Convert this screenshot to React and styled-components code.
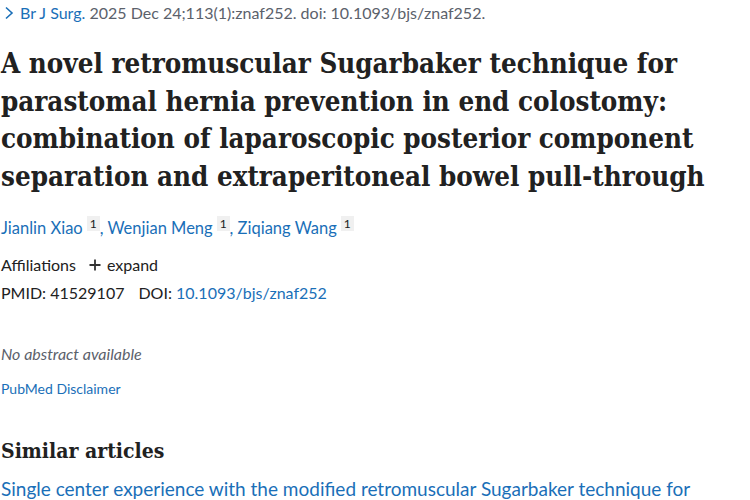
import styled, { createGlobalStyle } from 'styled-components'

const GlobalStyle = createGlobalStyle`
  html, body {
    margin: 0;
    padding: 0;
    background: #fff;
    overflow: hidden;
  }
  body {
    font-family: Lato, "Open Sans", sans-serif;
    color: #212121;
  }
`

const Page = styled.main`
  display: flex;
  flex-direction: column;
  padding: 3px 0 0 1px;
  width: 750px;
  height: 500px;
  box-sizing: border-box;
  overflow: hidden;
`

const Citation = styled.div`
  display: flex;
  align-items: center;
  gap: 6px;
  font-size: 16px;
  line-height: 20px;
  color: #5b616b;
  padding-left: 3px;
`

const Link = styled.a`
  color: #1a6fb8;
  text-decoration: none;
`

const Title = styled.h1`
  margin: 22px 0 0;
  font-family: "DejaVu Serif Condensed", "DejaVu Serif", serif;
  font-stretch: condensed;
  font-size: 27.5px;
  line-height: 37.5px;
  font-weight: 700;
  color: #212121;
`

const Authors = styled.div`
  margin-top: 21px;
  font-size: 16.5px;
  line-height: 24px;
  color: #1a6fb8;
`

const Ref = styled.sup`
  display: inline-block;
  margin-left: 4px;
  padding: 0 3px;
  background: #f0f0f0;
  color: #212121;
  font-size: 12px;
  line-height: 15px;
  vertical-align: 6px;
`

const MetaRow = styled.div`
  display: flex;
  align-items: center;
  gap: ${(p) => p.$gap || 0}px;
  margin-top: ${(p) => p.$top}px;
  font-size: 16px;
  line-height: 24px;
  color: #212121;
`

const Expand = styled.span`
  display: inline-flex;
  align-items: center;
  gap: 5px;
  color: #212121;
`

const Empty = styled.p`
  margin: 37px 0 0;
  font-size: 16px;
  line-height: 24px;
  font-style: italic;
  color: #5b616b;
`

const Disclaimer = styled.a`
  align-self: flex-start;
  margin-top: 13px;
  font-size: 14px;
  line-height: 20px;
  color: #1a6fb8;
  text-decoration: none;
`

const Heading = styled.h2`
  margin: 37px 0 0;
  font-family: "DejaVu Serif Condensed", "DejaVu Serif", serif;
  font-stretch: condensed;
  font-size: 21px;
  line-height: 30px;
  font-weight: 700;
  color: #212121;
`

const Similar = styled.a`
  margin-top: 10px;
  font-size: 19px;
  line-height: 26px;
  color: #1a6fb8;
  text-decoration: none;
`

function Chevron() {
  return (
    <svg width="10" height="14" viewBox="0 0 10 14" fill="none">
      <polyline points="2,1.5 8,7 2,12.5" stroke="#1a6fb8" strokeWidth="1.6" />
    </svg>
  )
}

function Plus() {
  return (
    <svg width="14" height="14" viewBox="0 0 14 14">
      <path d="M7 1.5v11M1.5 7h11" stroke="#333" strokeWidth="1.8" />
    </svg>
  )
}

const authors = ['Jianlin Xiao', 'Wenjian Meng', 'Ziqiang Wang']

export default function App() {
  return (
    <Page>
      <GlobalStyle />
      <Citation>
        <Chevron />
        <span>
          <Link href="#">Br J Surg.</Link> 2025 Dec 24;113(1):znaf252. doi: 10.1093/bjs/znaf252.
        </span>
      </Citation>

      <Title>
        A novel retromuscular Sugarbaker technique for parastomal hernia prevention in end colostomy:
        combination of laparoscopic posterior component separation and extraperitoneal bowel pull-through
      </Title>

      <Authors>
        {authors.map((name, i) => (
          <span key={name}>
            {name}
            <Ref>1</Ref>
            {i < authors.length - 1 ? ', ' : ''}
          </span>
        ))}
      </Authors>

      <MetaRow $top={13} $gap={12}>
        Affiliations
        <Expand>
          <Plus />
          expand
        </Expand>
      </MetaRow>
      <MetaRow $top={4} $gap={14}>
        <span>PMID: 41529107</span>
        <span>
          DOI: <Link href="#">10.1093/bjs/znaf252</Link>
        </span>
      </MetaRow>

      <Empty>No abstract available</Empty>
      <Disclaimer href="#">PubMed Disclaimer</Disclaimer>

      <Heading>Similar articles</Heading>
      <Similar href="#">
        Single center experience with the modified retromuscular Sugarbaker technique for
        parastomal hernia repair
      </Similar>
    </Page>
  )
}
